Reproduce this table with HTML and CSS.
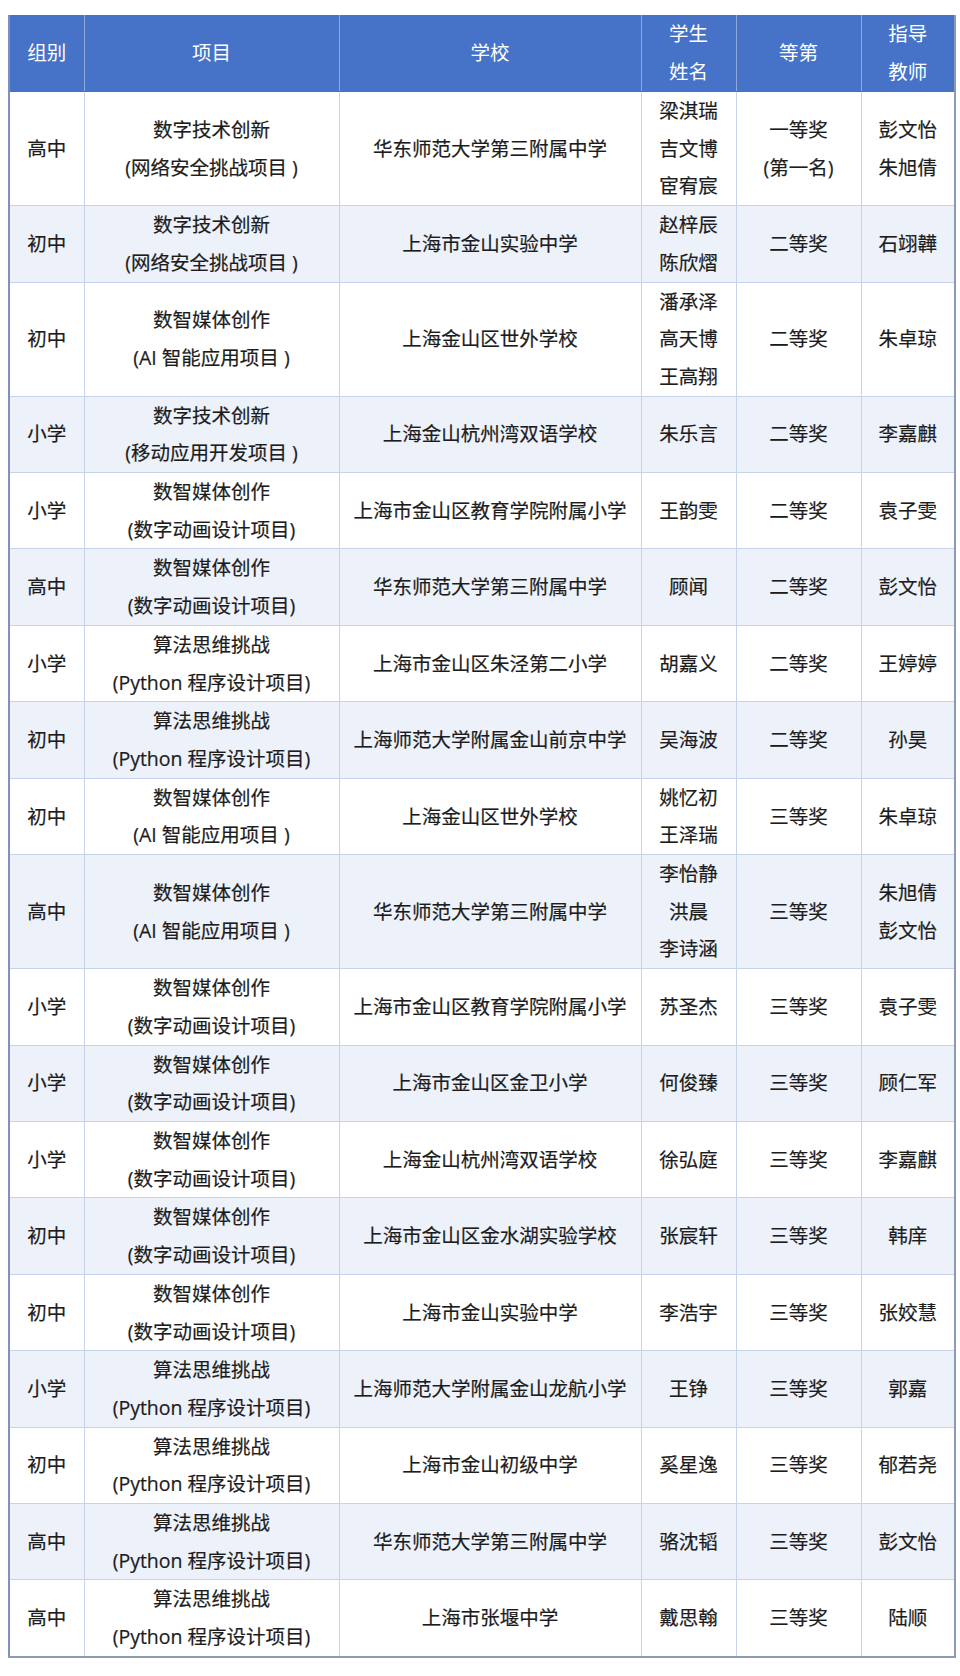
FILE: index.html
```html
<!DOCTYPE html>
<html lang="zh-CN">
<head>
<meta charset="utf-8">
<title>获奖名单</title>
<link rel="stylesheet" href="styles.css">
</head>
<body>
<table class="awards">
  <colgroup>
    <col class="c-group"><col class="c-proj"><col class="c-school"><col class="c-stu"><col class="c-rank"><col class="c-teacher">
  </colgroup>
  <thead>
    <tr><th>组别</th><th>项目</th><th>学校</th><th>学生<br>姓名</th><th>等第</th><th>指导<br>教师</th></tr>
  </thead>
  <tbody>
    <tr><td>高中</td><td>数字技术创新<br>(网络安全挑战项目 )</td><td>华东师范大学第三附属中学</td><td>梁淇瑞<br>吉文博<br>宦宥宸</td><td>一等奖<br>(第一名)</td><td>彭文怡<br>朱旭倩</td></tr>
    <tr class="alt"><td>初中</td><td>数字技术创新<br>(网络安全挑战项目 )</td><td>上海市金山实验中学</td><td>赵梓辰<br>陈欣熠</td><td>二等奖</td><td>石翊韡</td></tr>
    <tr><td>初中</td><td>数智媒体创作<br>(AI 智能应用项目 )</td><td>上海金山区世外学校</td><td>潘承泽<br>高天博<br>王高翔</td><td>二等奖</td><td>朱卓琼</td></tr>
    <tr class="alt"><td>小学</td><td>数字技术创新<br>(移动应用开发项目 )</td><td>上海金山杭州湾双语学校</td><td>朱乐言</td><td>二等奖</td><td>李嘉麒</td></tr>
    <tr><td>小学</td><td>数智媒体创作<br>(数字动画设计项目)</td><td>上海市金山区教育学院附属小学</td><td>王韵雯</td><td>二等奖</td><td>袁子雯</td></tr>
    <tr class="alt"><td>高中</td><td>数智媒体创作<br>(数字动画设计项目)</td><td>华东师范大学第三附属中学</td><td>顾闻</td><td>二等奖</td><td>彭文怡</td></tr>
    <tr><td>小学</td><td>算法思维挑战<br>(Python 程序设计项目)</td><td>上海市金山区朱泾第二小学</td><td>胡嘉义</td><td>二等奖</td><td>王婷婷</td></tr>
    <tr class="alt"><td>初中</td><td>算法思维挑战<br>(Python 程序设计项目)</td><td>上海师范大学附属金山前京中学</td><td>吴海波</td><td>二等奖</td><td>孙昊</td></tr>
    <tr><td>初中</td><td>数智媒体创作<br>(AI 智能应用项目 )</td><td>上海金山区世外学校</td><td>姚忆初<br>王泽瑞</td><td>三等奖</td><td>朱卓琼</td></tr>
    <tr class="alt"><td>高中</td><td>数智媒体创作<br>(AI 智能应用项目 )</td><td>华东师范大学第三附属中学</td><td>李怡静<br>洪晨<br>李诗涵</td><td>三等奖</td><td>朱旭倩<br>彭文怡</td></tr>
    <tr><td>小学</td><td>数智媒体创作<br>(数字动画设计项目)</td><td>上海市金山区教育学院附属小学</td><td>苏圣杰</td><td>三等奖</td><td>袁子雯</td></tr>
    <tr class="alt"><td>小学</td><td>数智媒体创作<br>(数字动画设计项目)</td><td>上海市金山区金卫小学</td><td>何俊臻</td><td>三等奖</td><td>顾仁军</td></tr>
    <tr><td>小学</td><td>数智媒体创作<br>(数字动画设计项目)</td><td>上海金山杭州湾双语学校</td><td>徐弘庭</td><td>三等奖</td><td>李嘉麒</td></tr>
    <tr class="alt"><td>初中</td><td>数智媒体创作<br>(数字动画设计项目)</td><td>上海市金山区金水湖实验学校</td><td>张宸轩</td><td>三等奖</td><td>韩庠</td></tr>
    <tr><td>初中</td><td>数智媒体创作<br>(数字动画设计项目)</td><td>上海市金山实验中学</td><td>李浩宇</td><td>三等奖</td><td>张姣慧</td></tr>
    <tr class="alt"><td>小学</td><td>算法思维挑战<br>(Python 程序设计项目)</td><td>上海师范大学附属金山龙航小学</td><td>王铮</td><td>三等奖</td><td>郭嘉</td></tr>
    <tr><td>初中</td><td>算法思维挑战<br>(Python 程序设计项目)</td><td>上海市金山初级中学</td><td>奚星逸</td><td>三等奖</td><td>郁若尧</td></tr>
    <tr class="alt"><td>高中</td><td>算法思维挑战<br>(Python 程序设计项目)</td><td>华东师范大学第三附属中学</td><td>骆沈韬</td><td>三等奖</td><td>彭文怡</td></tr>
    <tr><td>高中</td><td>算法思维挑战<br>(Python 程序设计项目)</td><td>上海市张堰中学</td><td>戴思翰</td><td>三等奖</td><td>陆顺</td></tr>
  </tbody>
</table>
</body>
</html>
```
FILE: styles.css
```css
html, body {
  margin: 0;
  padding: 0;
  background: #ffffff;
}

body {
  padding: 15px 0 0 8px;
  font-family: "Open Sans", "Noto Sans CJK SC", sans-serif;
  color: #1c1c1c;
}

.awards {
  width: 946px;
  table-layout: fixed;
  border-collapse: collapse;
  font-size: 19.5px;
  line-height: 37.7px;
  border-left: 2px solid #7f91c2;
  border-right: 2px solid #8b9bb3;
  border-bottom: 2px solid #8b9bb3;
}

.c-group { width: 75px; }
.c-proj { width: 255px; }
.c-school { width: 302px; }
.c-stu { width: 95px; }
.c-rank { width: 125px; }
.c-teacher { width: 94px; }

.awards th {
  background: #4673c8;
  color: #ffffff;
  font-weight: 400;
  padding: 0;
  height: 76px;
  text-align: center;
  vertical-align: middle;
  border-left: 1px solid #8eaadf;
  border-right: 1px solid #8eaadf;
  border-top: 0;
  border-bottom: 1px solid #4673c8;
}

.awards td {
  padding: 0;
  text-align: center;
  vertical-align: middle;
  border: 1px solid #c6d3e8;
  white-space: nowrap;
  -webkit-text-stroke: 0.2px #1c1c1c;
}

.awards tr.alt td {
  background: #edf1fa;
}
```
